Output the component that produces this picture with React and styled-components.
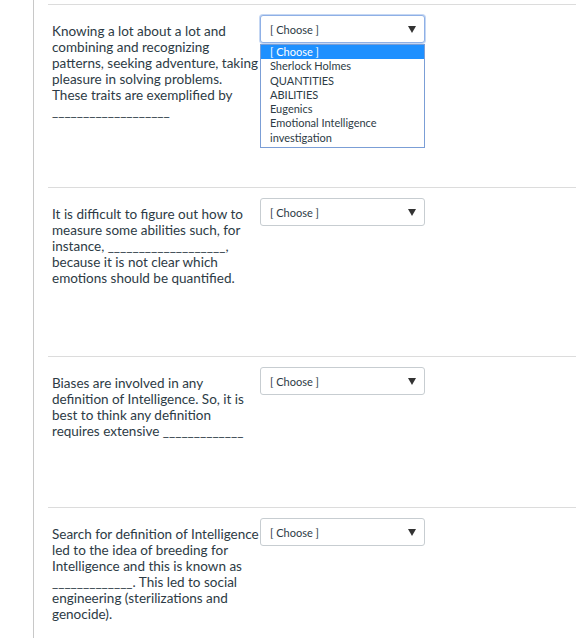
import styled, { createGlobalStyle } from "styled-components";

const GlobalStyle = createGlobalStyle`
  body {
    margin: 0;
    background: #fff;
    font-family: Lato, "Open Sans", "Liberation Sans", sans-serif;
  }
`;

const Page = styled.div`
  margin-left: 33px;
  min-height: 638px;
  border-left: 1px solid #c8c8c8;
  padding: 4px 7px 0 14px;
  box-sizing: border-box;
`;

const Row = styled.div`
  display: flex;
  align-items: flex-start;
  border-top: 1px solid #dcdcdc;
  padding: 10px 0 ${(p) => p.$bottom || 62}px 4px;
`;

const Prompt = styled.div`
  width: 208px;
  padding-top: 8px;
  font-size: 13.5px;
  line-height: 16px;
  color: #2d3b45;
`;

const SelectWrap = styled.div`
  position: relative;
  width: 165px;
`;

const SelectBox = styled.div`
  display: flex;
  align-items: center;
  justify-content: space-between;
  height: 28px;
  box-sizing: border-box;
  padding: 0 8px 0 9px;
  border: 1px solid ${(p) => (p.$open ? "#8fb0e6" : "#c7cdd1")};
  border-radius: 3px;
  box-shadow: ${(p) => (p.$open ? "0 0 0 1px #c5d7f3" : "none")};
  background: #fff;
  font-size: 11px;
  color: #2d3b45;
`;

const Arrow = styled.span`
  width: 0;
  height: 0;
  border-left: 4px solid transparent;
  border-right: 4px solid transparent;
  border-top: 7px solid #333;
`;

const Options = styled.ul`
  position: absolute;
  top: 29px;
  left: 0;
  width: 165px;
  box-sizing: border-box;
  margin: 0;
  padding: 0 0 2px;
  list-style: none;
  border: 1px solid #7b9ed6;
  background: #fff;
`;

const Option = styled.li`
  padding-left: 9px;
  height: 14.3px;
  line-height: 14px;
  font-size: 11px;
  color: ${(p) => (p.$active ? "#fff" : "#2d3b45")};
  background: ${(p) => (p.$active ? "#1e90ff" : "transparent")};
`;

const choices = [
  "[ Choose ]",
  "Sherlock Holmes",
  "QUANTITIES",
  "ABILITIES",
  "Eugenics",
  "Emotional Intelligence",
  "investigation",
];

const Dropdown = ({ open }) => (
  <SelectWrap>
    <SelectBox $open={open}>
      <span>[ Choose ]</span>
      <Arrow />
    </SelectBox>
    {open && (
      <Options>
        {choices.map((c, i) => (
          <Option key={c} $active={i === 0}>
            {c}
          </Option>
        ))}
      </Options>
    )}
  </SelectWrap>
);

const App = () => {
  return (
    <>
      <GlobalStyle />
      <Page>
        <Row $bottom={68}>
          <Prompt>
            Knowing a lot about a lot and combining and recognizing patterns,
            seeking adventure, taking pleasure in solving problems. These traits
            are exemplified by ___________________
          </Prompt>
          <Dropdown open />
        </Row>
        <Row $bottom={70}>
          <Prompt>
            It is difficult to figure out how to measure some abilities such,
            for instance, ___________________, because it is not clear which
            emotions should be quantified.
          </Prompt>
          <Dropdown />
        </Row>
        <Row $bottom={68}>
          <Prompt>
            Biases are involved in any definition of Intelligence. So, it is
            best to think any definition requires extensive _____________
          </Prompt>
          <Dropdown />
        </Row>
        <Row $bottom={10}>
          <Prompt>
            Search for definition of Intelligence led to the idea of breeding
            for Intelligence and this is known as _____________. This led to
            social engineering (sterilizations and genocide).
          </Prompt>
          <Dropdown />
        </Row>
      </Page>
    </>
  );
};

export default App;
